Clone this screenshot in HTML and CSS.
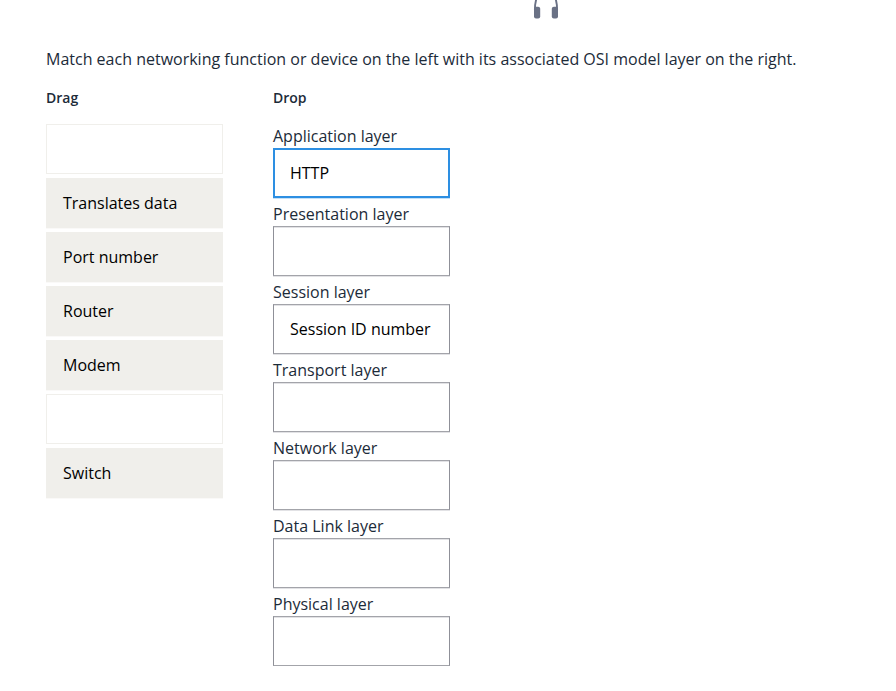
FILE: index.html
```html
<!DOCTYPE html>
<html lang="en">
<head>
  <meta charset="UTF-8">
  <meta name="viewport" content="width=device-width, initial-scale=1.0">
  <title>OSI model matching</title>
  <link rel="stylesheet" href="styles.css">
</head>
<body>
  <div class="audio">
    <svg class="headphones" width="26" height="20" viewBox="0 0 26 20">
      <path d="M1.9 10C1.9 -18 24.1 -18 24.1 10" fill="none" stroke="#6a7185" stroke-width="1.9"/>
      <rect x="1" y="6.8" width="6.2" height="11.7" rx="2"/>
      <rect x="18.8" y="6.8" width="6.2" height="11.7" rx="2"/>
    </svg>
  </div>

  <div class="question">
    <p class="prompt">Match each networking function or device on the left with its associated OSI model layer on the right.</p>

    <div class="columns">
      <div class="column">
        <h2 class="heading">Drag</h2>
        <div class="drag-list">
          <div class="drag-item empty"></div>
          <div class="drag-item">Translates data</div>
          <div class="drag-item">Port number</div>
          <div class="drag-item">Router</div>
          <div class="drag-item">Modem</div>
          <div class="drag-item empty"></div>
          <div class="drag-item">Switch</div>
        </div>
      </div>

      <div class="column">
        <h2 class="heading">Drop</h2>
        <div class="drop-list">
          <div class="drop-label">Application layer</div>
          <div class="drop-box active">HTTP</div>
          <div class="drop-label">Presentation layer</div>
          <div class="drop-box"></div>
          <div class="drop-label">Session layer</div>
          <div class="drop-box">Session ID number</div>
          <div class="drop-label">Transport layer</div>
          <div class="drop-box"></div>
          <div class="drop-label">Network layer</div>
          <div class="drop-box"></div>
          <div class="drop-label">Data Link layer</div>
          <div class="drop-box"></div>
          <div class="drop-label">Physical layer</div>
          <div class="drop-box"></div>
        </div>
      </div>
    </div>
  </div>
</body>
</html>
```
FILE: styles.css
```css
* {
  box-sizing: border-box;
  margin: 0;
  padding: 0;
}

body {
  background-color: #fff;
  color: #1c2b39;
  font-family: "Open Sans", "Noto Sans", sans-serif;
  font-size: 16px;
  line-height: 24px;
}

.audio {
  height: 47px;
  padding-left: 533px;
}

.headphones {
  display: block;
  fill: #6a7185;
}

.question {
  padding-left: 46px;
}

.prompt {
  white-space: nowrap;
}

.columns {
  display: flex;
  gap: 50px;
  margin-top: 15px;
}

.column {
  width: 177px;
}

.heading {
  height: 38px;
  font-size: 14px;
  font-weight: 600;
  line-height: 24px;
}

.drag-list {
  display: flex;
  flex-direction: column;
  gap: 4px;
}

.drag-item {
  height: 50px;
  padding: 13px 17px;
  background-color: #f0efeb;
  box-shadow: 0 1px 0 #faf9f8;
  color: #000;
}

.drag-item.empty {
  background-color: #fff;
  border: 1px solid #f0efeb;
  box-shadow: none;
}

.drop-label {
  height: 28px;
  padding-top: 4px;
}

.drop-list .drop-label:first-child {
  height: 24px;
  padding-top: 0;
}

.drop-box {
  height: 50px;
  padding: 12px 16px;
  border: 1px solid #8f9098;
  border-top-color: #a3a4aa;
  border-bottom-color: #a3a4aa;
  box-shadow: 0 1px 0 #e2e2e5, inset 0 1px 0 #e2e2e5;
  color: #000;
  white-space: nowrap;
}

.drop-box.active {
  padding: 11px 15px;
  border: 2px solid #2d8fe2;
  box-shadow: 0 1px 0 #c5e0f7;
}
```
